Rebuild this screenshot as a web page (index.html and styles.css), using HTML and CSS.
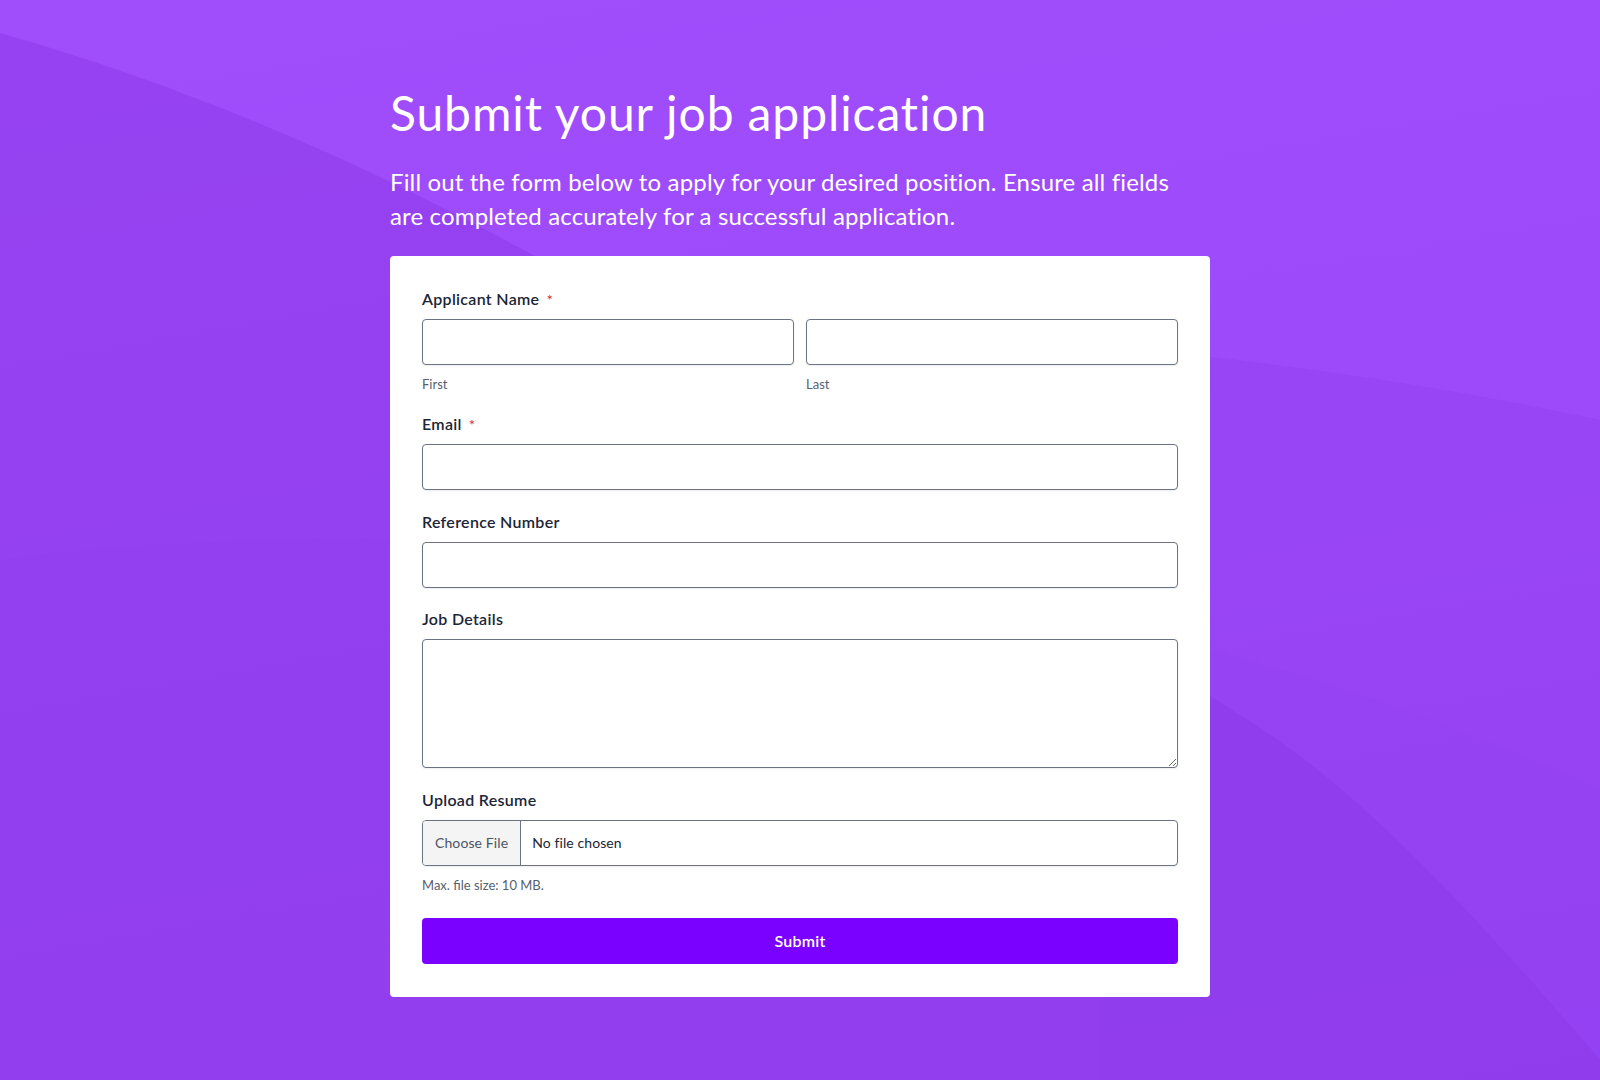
FILE: index.html
```html
<!DOCTYPE html>
<html lang="en">
<head>
<meta charset="utf-8">
<title>Submit your job application</title>
<link rel="stylesheet" href="styles.css">
</head>
<body>
<svg class="bg-waves" viewBox="0 0 1600 1080" preserveAspectRatio="none" aria-hidden="true">
  <path d="M0 33 C 200 90, 380 170, 560 270 C 800 400, 1000 560, 1235 712 C 1330 770, 1420 850, 1600 1060 L 1600 1080 L 0 1080 Z" fill="#8c37e8" opacity="0.5"/>
  <path d="M1100 345 C 1260 360, 1440 385, 1600 420 L 1600 1080 L 1100 1080 Z" fill="#8f3beb" opacity="0.3"/>
  <path d="M0 560 C 300 520, 700 540, 1000 600 C 1250 650, 1450 720, 1600 790 L 1600 1080 L 0 1080 Z" fill="#8c37e8" opacity="0.1"/>
</svg>
<main class="page">
  <h1 class="title">Submit your job application</h1>
  <p class="intro">Fill out the form below to apply for your desired position. Ensure all fields are completed accurately for a successful application.</p>
  <form class="card">
    <div class="field">
      <div class="label">Applicant Name <span class="req">*</span></div>
      <div class="name-row">
        <div class="name-col">
          <input class="input" type="text">
          <div class="sub">First</div>
        </div>
        <div class="name-col">
          <input class="input" type="text">
          <div class="sub">Last</div>
        </div>
      </div>
    </div>
    <div class="field">
      <div class="label">Email <span class="req">*</span></div>
      <input class="input" type="email">
    </div>
    <div class="field">
      <div class="label">Reference Number</div>
      <input class="input" type="text">
    </div>
    <div class="field">
      <div class="label">Job Details</div>
      <textarea class="input textarea"></textarea>
    </div>
    <div class="field">
      <div class="label">Upload Resume</div>
      <div class="file">
        <span class="file-btn">Choose File</span>
        <span class="file-name">No file chosen</span>
      </div>
      <div class="help">Max. file size: 10 MB.</div>
    </div>
    <button class="submit" type="button">Submit</button>
  </form>
</main>
</body>
</html>
```

FILE: styles.css
```css
html, body {
  margin: 0;
  padding: 0;
}
body {
  min-height: 1080px;
  background: linear-gradient(170deg, #a04dfc 0%, #9d4afa 45%, #9945f6 100%);
  font-family: "Lato", "Liberation Sans", sans-serif;
  color: #1e293b;
  position: relative;
  overflow: hidden;
}
.bg-waves {
  position: absolute;
  left: 0;
  top: 0;
  width: 1600px;
  height: 1080px;
  z-index: 0;
}
.page {
  position: relative;
  z-index: 1;
  width: 820px;
  margin: 0 auto;
  padding-top: 84px;
}
.title {
  margin: 0;
  font-size: 48px;
  line-height: 1.2;
  font-weight: 400;
  color: #ffffff;
  letter-spacing: 0.9px;
}
.intro {
  max-width: 800px;
  margin: 23px 0 23px;
  font-size: 24px;
  line-height: 34px;
  font-weight: 400;
  color: #ffffff;
  letter-spacing: 0.15px;
}
.card {
  background: #ffffff;
  border-radius: 4px;
  padding: 33px 32px;
  display: flex;
  flex-direction: column;
}
.field {
  display: flex;
  flex-direction: column;
  margin-bottom: 21.5px;
}
.label {
  font-size: 16px;
  line-height: 20px;
  height: 20px;
  font-weight: 600;
  color: #1b2537;
  margin-bottom: 10px;
  letter-spacing: 0.3px;
}
.req {
  color: #d83a2e;
  font-size: 14px;
  margin-left: 3px;
  vertical-align: 0;
}
.name-row {
  display: flex;
  gap: 12px;
}
.name-col {
  flex: 1;
  display: flex;
  flex-direction: column;
}
.input {
  box-sizing: border-box;
  height: 46px;
  width: 100%;
  border: 1px solid #6b7280;
  border-radius: 4px;
  background: #ffffff;
  box-shadow: 0 1px 2px rgba(15, 23, 42, 0.08);
  margin: 0;
  font-family: inherit;
  font-size: 16px;
  padding: 0 12px;
  outline: none;
}
.textarea {
  height: 129px;
  resize: vertical;
  display: block;
}
.sub {
  font-size: 13px;
  line-height: 17px;
  color: #57606f;
  margin-top: 11px;
}
.file {
  box-sizing: border-box;
  height: 46px;
  display: flex;
  align-items: stretch;
  border: 1px solid #6b7280;
  border-radius: 4px;
  overflow: hidden;
  box-shadow: 0 1px 2px rgba(15, 23, 42, 0.08);
}
.file-btn {
  display: flex;
  align-items: center;
  padding: 0 12px;
  background: #f4f4f5;
  border-right: 1px solid #6b7280;
  font-size: 14px;
  color: #4b5563;
  letter-spacing: 0.1px;
}
.file-name {
  display: flex;
  align-items: center;
  padding: 0 11px;
  font-size: 14px;
  color: #1b2537;
  letter-spacing: 0.1px;
}
.help {
  font-size: 13px;
  line-height: 16px;
  color: #57606f;
  margin-top: 11px;
}
.field:last-of-type {
  margin-bottom: 25px;
}
.submit {
  height: 46px;
  border: none;
  border-radius: 4px;
  background: #7a00ff;
  color: #ffffff;
  font-family: inherit;
  font-size: 16px;
  font-weight: 600;
  letter-spacing: 0.2px;
  cursor: pointer;
}
```
